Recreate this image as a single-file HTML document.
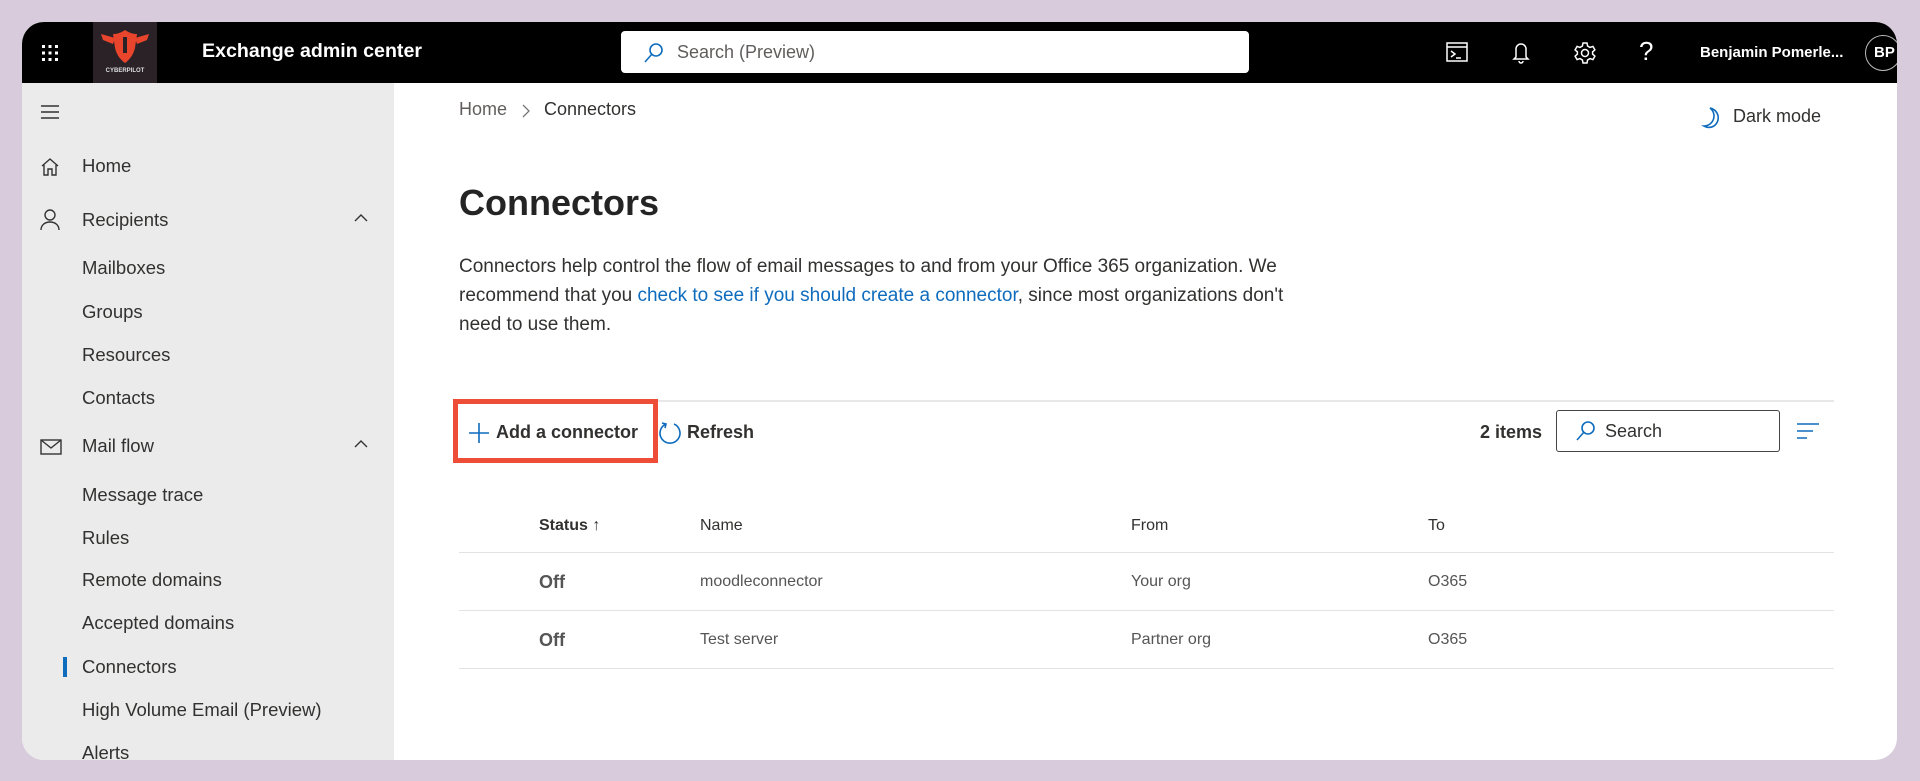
<!DOCTYPE html>
<html><head><meta charset="utf-8"><style>
*{box-sizing:border-box;margin:0;padding:0}
body{width:1920px;height:781px;background:#d8cbdc;font-family:"Liberation Sans",sans-serif;color:#323130;position:relative;overflow:hidden}
.card{position:absolute;left:22px;top:22px;width:1875px;height:738px;background:#fff;border-radius:22px;overflow:hidden}
.hdr{position:absolute;left:0;top:0;width:100%;height:61px;background:#000}
.side{position:absolute;left:0;top:61px;width:372px;height:700px;background:#ebebeb}
.a{position:absolute;white-space:nowrap}
.nav{font-size:18.5px;color:#323130}
</style></head><body>
<div class="card">
 <div class="hdr">
  <svg class="a" style="left:18px;top:21px" width="20" height="20" viewBox="0 0 20 20" fill="#fff">
   <rect x="2" y="2" width="3" height="3"/><rect x="8.5" y="2" width="3" height="3"/><rect x="15" y="2" width="3" height="3"/>
   <rect x="2" y="8.5" width="3" height="3"/><rect x="8.5" y="8.5" width="3" height="3"/><rect x="15" y="8.5" width="3" height="3"/>
   <rect x="2" y="15" width="3" height="3"/><rect x="8.5" y="15" width="3" height="3"/><rect x="15" y="15" width="3" height="3"/></svg>
  <div class="a" style="left:71px;top:0;width:64px;height:61px;background:#2b2228">
   <svg class="a" style="left:6px;top:6px" width="52" height="36" viewBox="0 0 52 36">
    <path d="M2 6 L16 10 L14 16 L4 12Z M50 6 L36 10 L38 16 L48 12Z" fill="#e8452c"/>
    <path d="M26 2 C20 6 16 6 14 6 L16 20 C18 28 22 32 26 35 C30 32 34 28 36 20 L38 6 C36 6 32 6 26 2Z" fill="#e8452c"/>
    <rect x="24" y="9" width="4" height="16" fill="#2b2228"/></svg>
   <div class="a" style="left:0;width:64px;top:46px;text-align:center;color:#ddd;font-size:6px;font-weight:bold">CYBERPILOT</div>
  </div>
  <div class="a" style="left:180px;top:18px;color:#fff;font-size:19.6px;font-weight:bold">Exchange admin center</div>
  <div class="a" style="left:599px;top:9px;width:628px;height:42px;background:#fff;border-radius:4px">
   <svg class="a" style="left:22px;top:11px" width="22" height="22" viewBox="0 0 22 22" fill="none" stroke="#0f6cbd" stroke-width="1.6"><circle cx="13" cy="8" r="6"/><path d="M9 12 L2 20"/></svg>
   <div class="a" style="left:56px;top:11px;font-size:18px;color:#605e5c">Search (Preview)</div>
  </div>
  <svg class="a" style="left:1424px;top:20px" width="22" height="20" viewBox="0 0 22 20" fill="none" stroke="#fff" stroke-width="1.5"><rect x="1" y="1" width="20" height="18"/><path d="M1 5H21M5 9L9 12L5 15M10 16H15"/></svg>
  <svg class="a" style="left:1490px;top:18px" width="18" height="24" viewBox="0 0 18 24" fill="none" stroke="#fff" stroke-width="1.5"><path d="M4 17V9a5 5 0 0 1 10 0v8l2 2H2Z"/><path d="M7 21a2 2 0 0 0 4 0"/></svg>
  <svg class="a" style="left:1551px;top:19px" width="24" height="24" viewBox="0 0 24 24" fill="none" stroke="#fff" stroke-width="1.5"><circle cx="12" cy="12" r="3.5"/><path d="M10 2h4l.6 3 2.4 1.4 2.9-1 2 3.5-2.3 2v2.2l2.3 2-2 3.5-2.9-1L14.6 19 14 22h-4l-.6-3L7 17.6l-2.9 1-2-3.5 2.3-2v-2.2l-2.3-2 2-3.5 2.9 1L9.4 5Z"/></svg>
  <div class="a" style="left:1617px;top:14px;color:#fff;font-size:26px">?</div>
  <div class="a" style="left:1678px;top:22px;color:#fff;font-size:15px;font-weight:bold">Benjamin Pomerle...</div>
  <div class="a" style="left:1843px;top:13px;width:36px;height:36px;border:1.5px solid #bbb;border-radius:50%;color:#fff;font-size:15px;font-weight:bold;padding:8px 0 0 8px">BP</div>
 </div>
 <div class="side">
  <svg class="a" style="left:18px;top:22px" width="20" height="14" viewBox="0 0 20 14" stroke="#333" stroke-width="1.5"><path d="M1 1H19M1 7H19M1 13H19"/></svg>
  <svg class="a" style="left:18px;top:74px" width="20" height="20" viewBox="0 0 20 20" fill="none" stroke="#333" stroke-width="1.4"><path d="M2 9 L10 2 L18 9 M4 8V18H8V12H12V18H16V8"/></svg>
  <div class="a nav" style="left:60px;top:72px">Home</div>
  <svg class="a" style="left:18px;top:126px" width="20" height="22" viewBox="0 0 20 22" fill="none" stroke="#333" stroke-width="1.4"><circle cx="10" cy="6" r="5"/><path d="M1 21c0-5 4-8 9-8s9 3 9 8"/></svg>
  <div class="a nav" style="left:60px;top:126px">Recipients</div>
  <svg class="a" style="left:332px;top:130px" width="14" height="10" viewBox="0 0 14 10" fill="none" stroke="#333" stroke-width="1.4"><path d="M1 8L7 2L13 8"/></svg>
  <div class="a nav" style="left:60px;top:174px">Mailboxes</div>
  <div class="a nav" style="left:60px;top:218px">Groups</div>
  <div class="a nav" style="left:60px;top:261px">Resources</div>
  <div class="a nav" style="left:60px;top:304px">Contacts</div>
  <svg class="a" style="left:18px;top:356px" width="22" height="16" viewBox="0 0 22 16" fill="none" stroke="#333" stroke-width="1.4"><rect x="1" y="1" width="20" height="14"/><path d="M1 1L11 9L21 1"/></svg>
  <div class="a nav" style="left:60px;top:352px">Mail flow</div>
  <svg class="a" style="left:332px;top:356px" width="14" height="10" viewBox="0 0 14 10" fill="none" stroke="#333" stroke-width="1.4"><path d="M1 8L7 2L13 8"/></svg>
  <div class="a nav" style="left:60px;top:401px">Message trace</div>
  <div class="a nav" style="left:60px;top:444px">Rules</div>
  <div class="a nav" style="left:60px;top:486px">Remote domains</div>
  <div class="a nav" style="left:60px;top:529px">Accepted domains</div>
  <div class="a" style="left:41px;top:574px;width:4px;height:20px;background:#0f6cbd"></div>
  <div class="a nav" style="left:60px;top:573px">Connectors</div>
  <div class="a nav" style="left:60px;top:616px">High Volume Email (Preview)</div>
  <div class="a nav" style="left:60px;top:659px">Alerts</div>
 </div>
 <div class="a" style="left:437px;top:77px;font-size:18px;color:#605e5c">Home</div>
 <svg class="a" style="left:500px;top:82px" width="8" height="14" viewBox="0 0 8 14" fill="none" stroke="#777" stroke-width="1.3"><path d="M1 1L7 7L1 13"/></svg>
 <div class="a" style="left:522px;top:77px;font-size:18px;color:#323130">Connectors</div>
 <svg class="a" style="left:1678px;top:84px" width="24" height="24" viewBox="0 0 24 24" fill="none" stroke="#0f6cbd" stroke-width="1.6"><path d="M10 2a10 10 0 0 1 -6 18a10 10 0 0 0 10 0a10 10 0 0 0 -4 -18Z"/></svg>
 <div class="a" style="left:1711px;top:84px;font-size:18px;color:#323130">Dark mode</div>
 <div class="a" style="left:437px;top:160px;font-size:36px;font-weight:bold;color:#242424">Connectors</div>
 <div class="a" style="left:437px;top:230px;font-size:19px;line-height:29px;color:#323130">Connectors help control the flow of email messages to and from your Office 365 organization. We<br>recommend that you <span style="color:#0f6cbd">check to see if you should create a connector</span>, since most organizations don't<br>need to use them.</div>
 <div class="a" style="left:437px;top:378px;width:1375px;height:2px;background:#e8e8e8"></div>
 <div class="a" style="left:431px;top:377px;width:205px;height:64px;border:5px solid #ee4e37"></div>
 <svg class="a" style="left:446px;top:400px" width="22" height="22" viewBox="0 0 22 22" stroke="#0f6cbd" stroke-width="1.6"><path d="M11 1V21M1 11H21"/></svg>
 <div class="a" style="left:474px;top:400px;font-size:18px;font-weight:bold;color:#323130">Add a connector</div>
 <svg class="a" style="left:636px;top:399px" width="24" height="24" viewBox="0 0 24 24" fill="none" stroke="#0f6cbd" stroke-width="1.6"><path d="M8 3A10 10 0 1 0 16 3M4 2L8 3L7 7"/></svg>
 <div class="a" style="left:665px;top:400px;font-size:18px;font-weight:bold;color:#323130">Refresh</div>
 <div class="a" style="left:1458px;top:400px;font-size:18px;font-weight:bold;color:#323130">2 items</div>
 <div class="a" style="left:1534px;top:388px;width:224px;height:42px;border:1.5px solid #444;border-radius:3px">
  <svg class="a" style="left:18px;top:9px" width="22" height="22" viewBox="0 0 22 22" fill="none" stroke="#0f6cbd" stroke-width="1.6"><circle cx="13" cy="8" r="6"/><path d="M9 12 L2 20"/></svg>
  <div class="a" style="left:48px;top:10px;font-size:18px;color:#323130">Search</div>
 </div>
 <svg class="a" style="left:1774px;top:400px" width="24" height="18" viewBox="0 0 24 18" stroke="#0f6cbd" stroke-width="1.6"><path d="M1 2H23M1 9H17M1 16H11"/></svg>
 <div class="a" style="left:517px;top:495px;font-size:16px;font-weight:bold;color:#323130">Status <span style="font-weight:normal">&#8593;</span></div>
 <div class="a" style="left:678px;top:495px;font-size:16px;color:#323130">Name</div>
 <div class="a" style="left:1109px;top:495px;font-size:16px;color:#323130">From</div>
 <div class="a" style="left:1406px;top:495px;font-size:16px;color:#323130">To</div>
 <div class="a" style="left:437px;top:530px;width:1375px;height:1px;background:#e3e3e3"></div>
 <div class="a" style="left:517px;top:550px;font-size:18px;font-weight:bold;color:#555">Off</div>
 <div class="a" style="left:678px;top:551px;font-size:16px;color:#555">moodleconnector</div>
 <div class="a" style="left:1109px;top:551px;font-size:16px;color:#555">Your org</div>
 <div class="a" style="left:1406px;top:551px;font-size:16px;color:#555">O365</div>
 <div class="a" style="left:437px;top:588px;width:1375px;height:1px;background:#e3e3e3"></div>
 <div class="a" style="left:517px;top:608px;font-size:18px;font-weight:bold;color:#555">Off</div>
 <div class="a" style="left:678px;top:609px;font-size:16px;color:#555">Test server</div>
 <div class="a" style="left:1109px;top:609px;font-size:16px;color:#555">Partner org</div>
 <div class="a" style="left:1406px;top:609px;font-size:16px;color:#555">O365</div>
 <div class="a" style="left:437px;top:646px;width:1375px;height:1px;background:#e3e3e3"></div>
</div>
</body></html>
